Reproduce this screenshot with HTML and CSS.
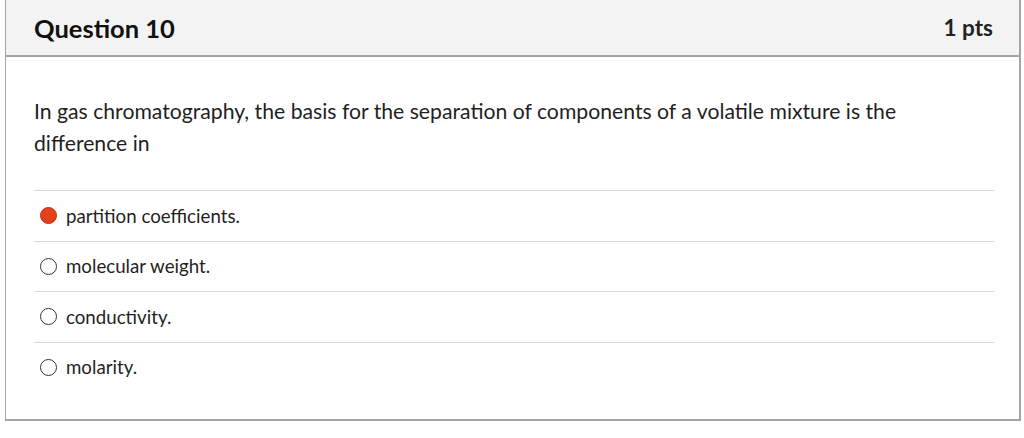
FILE: index.html
```html
<!DOCTYPE html>
<html>
<head>
<meta charset="utf-8">
<link rel="stylesheet" href="styles.css">
</head>
<body>
<div class="question">
  <div class="header">
    <h2 class="title">Question 10</h2>
    <span class="points">1 pts</span>
  </div>
  <div class="content">
    <p class="text">In gas chromatography, the basis for the separation of components of a volatile mixture is the difference in</p>
    <ul class="answers">
      <li class="answer"><span class="radio checked"></span><span class="label">partition coefficients.</span></li>
      <li class="answer"><span class="radio"></span><span class="label">molecular weight.</span></li>
      <li class="answer"><span class="radio"></span><span class="label">conductivity.</span></li>
      <li class="answer"><span class="radio"></span><span class="label">molarity.</span></li>
    </ul>
  </div>
</div>
</body>
</html>
```
FILE: styles.css
```css
html, body {
  margin: 0;
  padding: 0;
  background: #fff;
}
body {
  font-family: Lato, "Liberation Sans", sans-serif;
  color: #1a1a1a;
}
.question {
  margin: -1px 0 0 5px;
  width: 1016px;
  height: 422px;
  border: 1px solid #a5a5a5;
  border-bottom: 2px solid #a5a5a5;
  border-right: 2px solid #a5a5a5;
  box-sizing: border-box;
}
.header {
  height: 57px;
  box-sizing: border-box;
  background: #f3f3f3;
  border-bottom: 2px solid #a5a5a5;
  display: flex;
  align-items: center;
  justify-content: space-between;
  padding: 0 26px 0 28px;
}
.title {
  margin: 0;
  font-size: 25.5px;
  font-weight: 700;
  color: #111;
}
.points {
  font-size: 22.5px;
  font-weight: 700;
  color: #222;
}
.content {
  padding: 38px 25px 0 28px;
}
.text {
  margin: 0 30px 0 0;
  font-size: 21.2px;
  line-height: 32px;
  color: #1f1f1f;
}
.answers {
  list-style: none;
  margin: 31px 0 0;
  padding: 0;
}
.answer {
  display: flex;
  align-items: center;
  height: 50.5px;
  border-top: 1px solid #d7d7d7;
  padding-left: 6px;
  box-sizing: border-box;
}
.radio {
  width: 17px;
  height: 17px;
  border: 1.5px solid #333;
  border-radius: 50%;
  box-sizing: border-box;
  margin-right: 9px;
  flex: none;
}
.radio.checked {
  background: #e4401c;
  border: 1.5px solid #c23010;
}
.label {
  font-size: 18.7px;
  color: #1f1f1f;
}
```
